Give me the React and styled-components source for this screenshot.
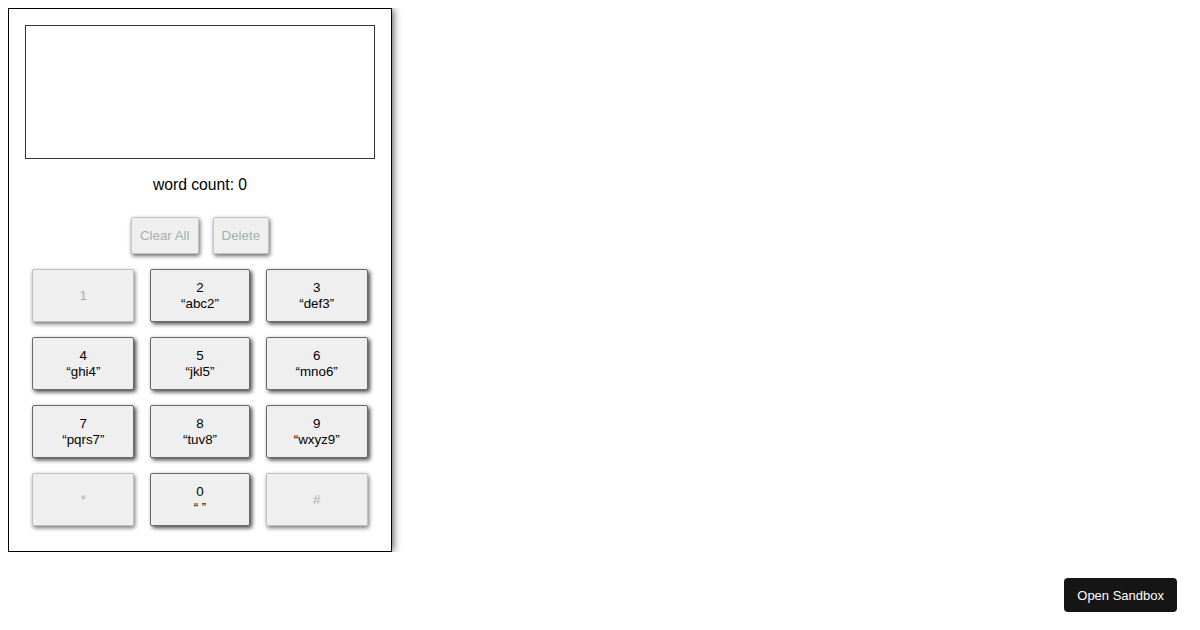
import React, { useState } from 'react'
import styled, { createGlobalStyle } from 'styled-components';

const GlobalStyle = createGlobalStyle`
    body {
        margin: 8px;
        font-family: "Liberation Sans", Arial, sans-serif;
        background: #ffffff;
        color: #000000;
    }
`;

const Phone = styled.div`
    width: 350px;
    padding: 16px;
    border: 1px solid #000000;
    box-shadow: 0 0 9px rgba(0, 0, 0, 0.85);
    background: #ffffff;
`;

const Screen = styled.textarea`
    display: block;
    box-sizing: border-box;
    width: 350px;
    height: 134px;
    margin: 0;
    padding: 16px;
    border: 1px solid #333333;
    resize: none;
    outline: none;
    caret-color: #000000;
    font-family: "Liberation Sans", Arial, sans-serif;
    font-size: 14px;
`;

const Count = styled.div`
    margin-top: 17px;
    text-align: center;
    font-size: 15.7px;
    line-height: 18px;
`;

const Actions = styled.div`
    display: flex;
    justify-content: center;
    gap: 14px;
    margin-top: 23px;
`;

const Action = styled.button`
    padding: 10px 8px;
    font-family: "Liberation Sans", Arial, sans-serif;
    font-size: 13.33px;
    line-height: 15px;
    color: #a3b1aa;
    background: #efefef;
    border: 1px solid #c4c4c4;
    border-radius: 2px;
    box-shadow: 1px 2px 4px rgba(0, 0, 0, 0.6);
`;

const Keys = styled.div`
    display: grid;
    grid-template-columns: repeat(3, 1fr);
    row-gap: 15px;
    margin-top: 15px;
    padding-bottom: 9px;
    justify-items: center;
`;

const Key = styled.button`
    width: ${p => (p.$wide ? '102px' : '100px')};
    height: 53px;
    padding: 0;
    display: flex;
    flex-direction: column;
    align-items: center;
    justify-content: center;
    font-family: "Liberation Sans", Arial, sans-serif;
    font-size: 13.33px;
    line-height: 16px;
    color: ${p => (p.disabled ? '#a2b0b6' : '#000000')};
    background: #efefef;
    border: 1px solid ${p => (p.disabled ? '#c0c0c0' : '#6a6a6a')};
    border-radius: 2px;
    box-shadow: ${p => (p.disabled
        ? '1px 2px 4px rgba(0, 0, 0, 0.55)'
        : '2px 2px 4px rgba(0, 0, 0, 0.75)')};
`;

const Sandbox = styled.button`
    position: fixed;
    right: 23px;
    bottom: 18px;
    height: 34px;
    padding: 0 13px;
    font-family: "Liberation Sans", Arial, sans-serif;
    font-size: 13px;
    color: #ffffff;
    background: #151515;
    border: none;
    border-radius: 4px;
`;

const keys = [
    { num: '1', disabled: true },
    { num: '2', letters: 'abc2' },
    { num: '3', letters: 'def3' },
    { num: '4', letters: 'ghi4' },
    { num: '5', letters: 'jkl5' },
    { num: '6', letters: 'mno6' },
    { num: '7', letters: 'pqrs7' },
    { num: '8', letters: 'tuv8' },
    { num: '9', letters: 'wxyz9' },
    { num: '*', disabled: true },
    { num: '0', letters: ' ' },
    { num: '#', disabled: true },
];

const App = () => {
  const [text, setText] = useState('')
  const words = text.trim() ? text.trim().split(/\s+/).length : 0

  return (
    <>
      <GlobalStyle />
      <Phone>
        <Screen autoFocus value={text} onChange={e => setText(e.target.value)} />
        <Count>word count: {words}</Count>
        <Actions>
          <Action disabled>Clear All</Action>
          <Action disabled>Delete</Action>
        </Actions>
        <Keys>
          {keys.map((k, i) => (
            <Key key={k.num} disabled={k.disabled} $wide={i % 3 !== 1}>
              <span>{k.num}</span>
              {k.letters !== undefined && <span>“{k.letters}”</span>}
            </Key>
          ))}
        </Keys>
      </Phone>
      <Sandbox>Open Sandbox</Sandbox>
    </>
  )
}

export default App
